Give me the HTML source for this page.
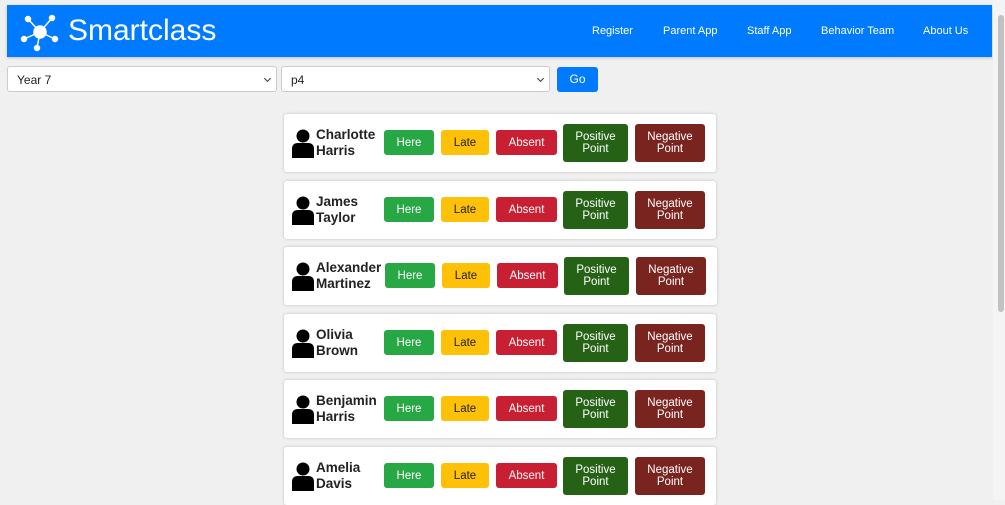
<!DOCTYPE html>
<html><head><style>
body{margin:0;width:1005px;height:500px;overflow:hidden;background:#f0f0f0;font-family:"Liberation Sans",Arial,sans-serif;position:relative}
.hdr{position:absolute;left:7px;top:5px;width:985px;height:52px;background:#007bff;box-shadow:0 1px 3px rgba(0,0,0,.2)}
.logo{position:absolute;left:61px;top:9px;color:#fff;font-size:30px;font-family:"Liberation Sans",sans-serif;font-weight:normal}
.nav a{position:absolute;top:20px;color:#fff;font-size:11px;text-decoration:none}
.sel{position:absolute;top:66px;height:26px;background:#fff;border:1px solid #ccc;border-radius:3px;box-sizing:border-box;font-size:12px;padding:6px 9px;color:#222}
.sel:after{content:"";position:absolute;right:6px;top:9px;width:4px;height:4px;border-right:1.5px solid #333;border-bottom:1.5px solid #333;transform:rotate(45deg)}
.go{position:absolute;left:557px;top:67px;width:41px;height:25px;background:#007bff;color:#fff;font-size:12px;text-align:center;line-height:25px;border-radius:3px}
.card{position:absolute;left:284px;width:432px;height:58px;background:#fff;border-radius:3px;box-shadow:0 0 3px rgba(0,0,0,.2)}
.ic{position:absolute;left:8px;top:15px}
.nm{position:absolute;left:32px;top:13px;font-size:13.5px;font-weight:bold;color:#222;line-height:16px}
.b{position:absolute;color:#fff;font-size:11.5px;text-align:center;border-radius:3px;display:flex;align-items:center;justify-content:center;line-height:12px}
.h{left:100px;top:16px;width:50px;height:25px;background:#28a745}
.l{left:157px;top:16px;width:48px;height:25px;background:#ffc107;color:#222}
.a{left:212px;top:16px;width:61px;height:25px;background:#c82032}
.p{left:279px;top:10px;width:65px;height:38px;background:#266216}
.n{left:351px;top:10px;width:70px;height:38px;background:#7a2420}
.sb{position:absolute;left:993px;top:0;width:12px;height:500px;background:#f4f4f4}
.th{position:absolute;left:998px;top:15px;width:6px;height:297px;background:#c2c2c2;border-radius:3px}
</style></head><body>
<div class="hdr">
<svg style="position:absolute;left:13px;top:7px" width="40" height="40" viewBox="0 0 40 40" fill="#fff" stroke="#fff" stroke-width="1.5">
<line x1="20" y1="20" x2="8" y2="7"/><line x1="20" y1="20" x2="32" y2="6"/><line x1="20" y1="20" x2="35" y2="27"/><line x1="20" y1="20" x2="4" y2="27"/><line x1="20" y1="20" x2="17" y2="36"/>
<circle cx="20" cy="20" r="6"/><circle cx="8" cy="7" r="2.5"/><circle cx="32" cy="6" r="2.5"/><circle cx="35" cy="27" r="2.5"/><circle cx="4" cy="27" r="2.5"/><circle cx="17" cy="36" r="2.5"/></svg>
<div class="logo">Smartclass</div>
<div class="nav"><a style="left:585px">Register</a><a style="left:656px">Parent App</a><a style="left:740px">Staff App</a><a style="left:814px">Behavior Team</a><a style="left:916px">About Us</a></div>
</div>
<div class="sel" style="left:7px;width:270px">Year 7</div>
<div class="sel" style="left:281px;width:269px">p4</div>
<div class="go">Go</div>

<div class="card" style="top:114px"><svg class="ic" width="22" height="29" viewBox="0 0 22 29"><circle cx="11" cy="7" r="6.5"/><path d="M0 29V20Q0 14 6 14H16Q22 14 22 20V29Z"/></svg><div class="nm">Charlotte<br>Harris</div><div class="b h">Here</div><div class="b l">Late</div><div class="b a">Absent</div><div class="b p">Positive<br>Point</div><div class="b n">Negative<br>Point</div></div>
<div class="card" style="top:181px"><svg class="ic" width="22" height="29" viewBox="0 0 22 29"><circle cx="11" cy="7" r="6.5"/><path d="M0 29V20Q0 14 6 14H16Q22 14 22 20V29Z"/></svg><div class="nm">James<br>Taylor</div><div class="b h">Here</div><div class="b l">Late</div><div class="b a">Absent</div><div class="b p">Positive<br>Point</div><div class="b n">Negative<br>Point</div></div>
<div class="card" style="top:247px;width:433px"><svg class="ic" width="22" height="29" viewBox="0 0 22 29"><circle cx="11" cy="7" r="6.5"/><path d="M0 29V20Q0 14 6 14H16Q22 14 22 20V29Z"/></svg><div class="nm">Alexander<br>Martinez</div><div class="b h" style="left:101px">Here</div><div class="b l" style="left:158px">Late</div><div class="b a" style="left:213px">Absent</div><div class="b p" style="left:280px">Positive<br>Point</div><div class="b n" style="left:352px">Negative<br>Point</div></div>
<div class="card" style="top:314px"><svg class="ic" width="22" height="29" viewBox="0 0 22 29"><circle cx="11" cy="7" r="6.5"/><path d="M0 29V20Q0 14 6 14H16Q22 14 22 20V29Z"/></svg><div class="nm">Olivia<br>Brown</div><div class="b h">Here</div><div class="b l">Late</div><div class="b a">Absent</div><div class="b p">Positive<br>Point</div><div class="b n">Negative<br>Point</div></div>
<div class="card" style="top:380px"><svg class="ic" width="22" height="29" viewBox="0 0 22 29"><circle cx="11" cy="7" r="6.5"/><path d="M0 29V20Q0 14 6 14H16Q22 14 22 20V29Z"/></svg><div class="nm">Benjamin<br>Harris</div><div class="b h">Here</div><div class="b l">Late</div><div class="b a">Absent</div><div class="b p">Positive<br>Point</div><div class="b n">Negative<br>Point</div></div>
<div class="card" style="top:447px"><svg class="ic" width="22" height="29" viewBox="0 0 22 29"><circle cx="11" cy="7" r="6.5"/><path d="M0 29V20Q0 14 6 14H16Q22 14 22 20V29Z"/></svg><div class="nm">Amelia<br>Davis</div><div class="b h">Here</div><div class="b l">Late</div><div class="b a">Absent</div><div class="b p">Positive<br>Point</div><div class="b n">Negative<br>Point</div></div>
<div class="sb"></div><div class="th"></div>
</body></html>
